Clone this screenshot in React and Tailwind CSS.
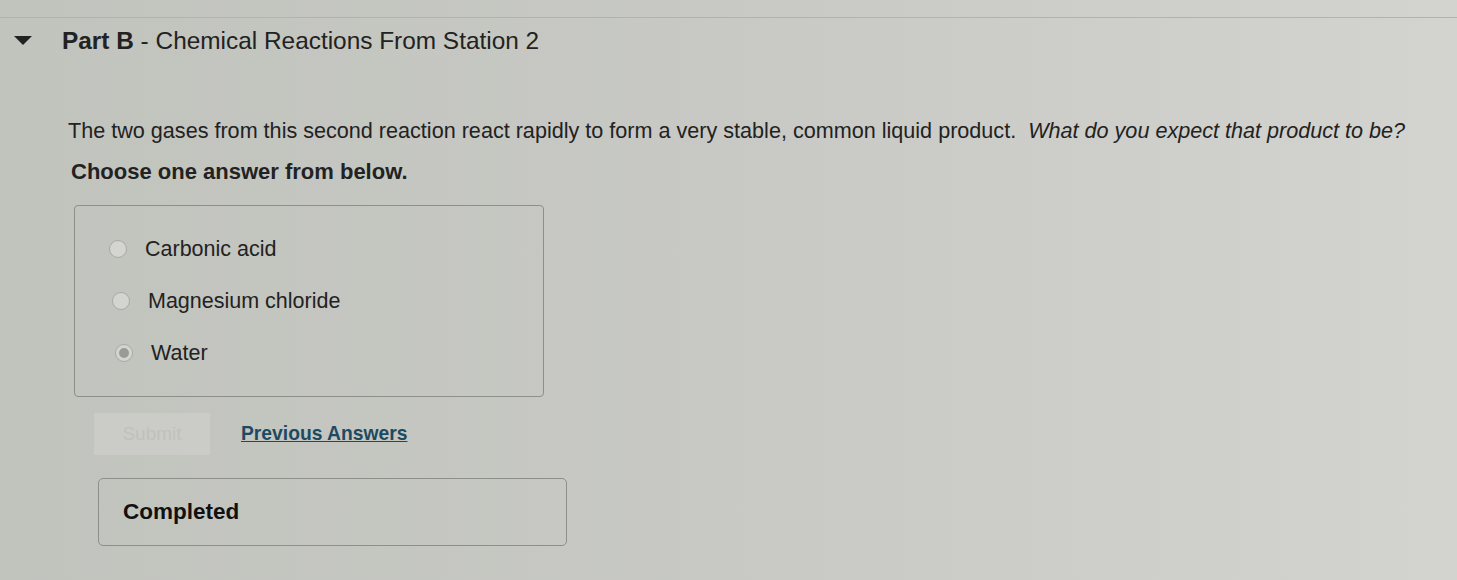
export default function App() {
  return (
    <div
      className="w-[1457px] h-[580px] overflow-hidden bg-gradient-to-r from-[#c1c3bd] via-[#c8c9c4] to-[#d3d3cf] text-[#222] relative"
      style={{ fontFamily: '"Liberation Sans", Arial, sans-serif' }}
    >
      <div className="h-[18px] border-b border-[#b2b3ae]" />
      <div className="flex items-center pl-[14px] pt-[8px]">
        <svg width="18" height="10" viewBox="0 0 18 10" className="mr-[30px]">
          <polygon points="0,0 18,0 9,9" fill="#222" />
        </svg>
        <div className="text-[24.4px] leading-[30px]">
          <span className="font-bold">Part B</span> - Chemical Reactions From Station 2
        </div>
      </div>
      <div className="pl-[68px] pt-[62px]">
        <p className="text-[21.6px] leading-[26px] whitespace-nowrap">
          The two gases from this second reaction react rapidly to form a very stable, common liquid product.&nbsp; <i>What do you expect that product to be?</i>
        </p>
        <p className="text-[22px] font-bold mt-[15px] ml-[3px] leading-[26px]">Choose one answer from below.</p>
        <div className="ml-[6px] mt-[20px] w-[470px] h-[192px] border border-[#8e8f8b] rounded-[4px] pt-[30px] pl-[34px] flex flex-col gap-[26px]">
          {[
            ['Carbonic acid', false],
            ['Magnesium chloride', false],
            ['Water', true],
          ].map(([label, checked], i) => (
            <div key={label} className="flex items-center gap-[18px]" style={{ marginLeft: i * 3 }}>
              <span className="w-[18px] h-[18px] rounded-full border border-[#a9aaa6] bg-[#d4d5d1] flex items-center justify-center">
                {checked && <span className="w-[10px] h-[10px] rounded-full bg-[#9a9b97]" />}
              </span>
              <span className="text-[21.5px] leading-[26px]">{label}</span>
            </div>
          ))}
        </div>
        <div className="flex items-center mt-[16px] ml-[26px]">
          <div className="w-[116px] h-[42px] bg-[#cbccc7] flex items-center justify-center text-[19px] text-[#c0c1bc]">
            Submit
          </div>
          <a className="ml-[31px] text-[19.3px] font-bold underline text-[#1d4a63]">Previous Answers</a>
        </div>
        <div className="ml-[30px] mt-[23px] w-[469px] h-[68px] border border-[#8e8f8b] rounded-[5px] flex items-center pl-[24px]">
          <span className="text-[22.5px] font-bold text-[#111]">Completed</span>
        </div>
      </div>
    </div>
  );
}
